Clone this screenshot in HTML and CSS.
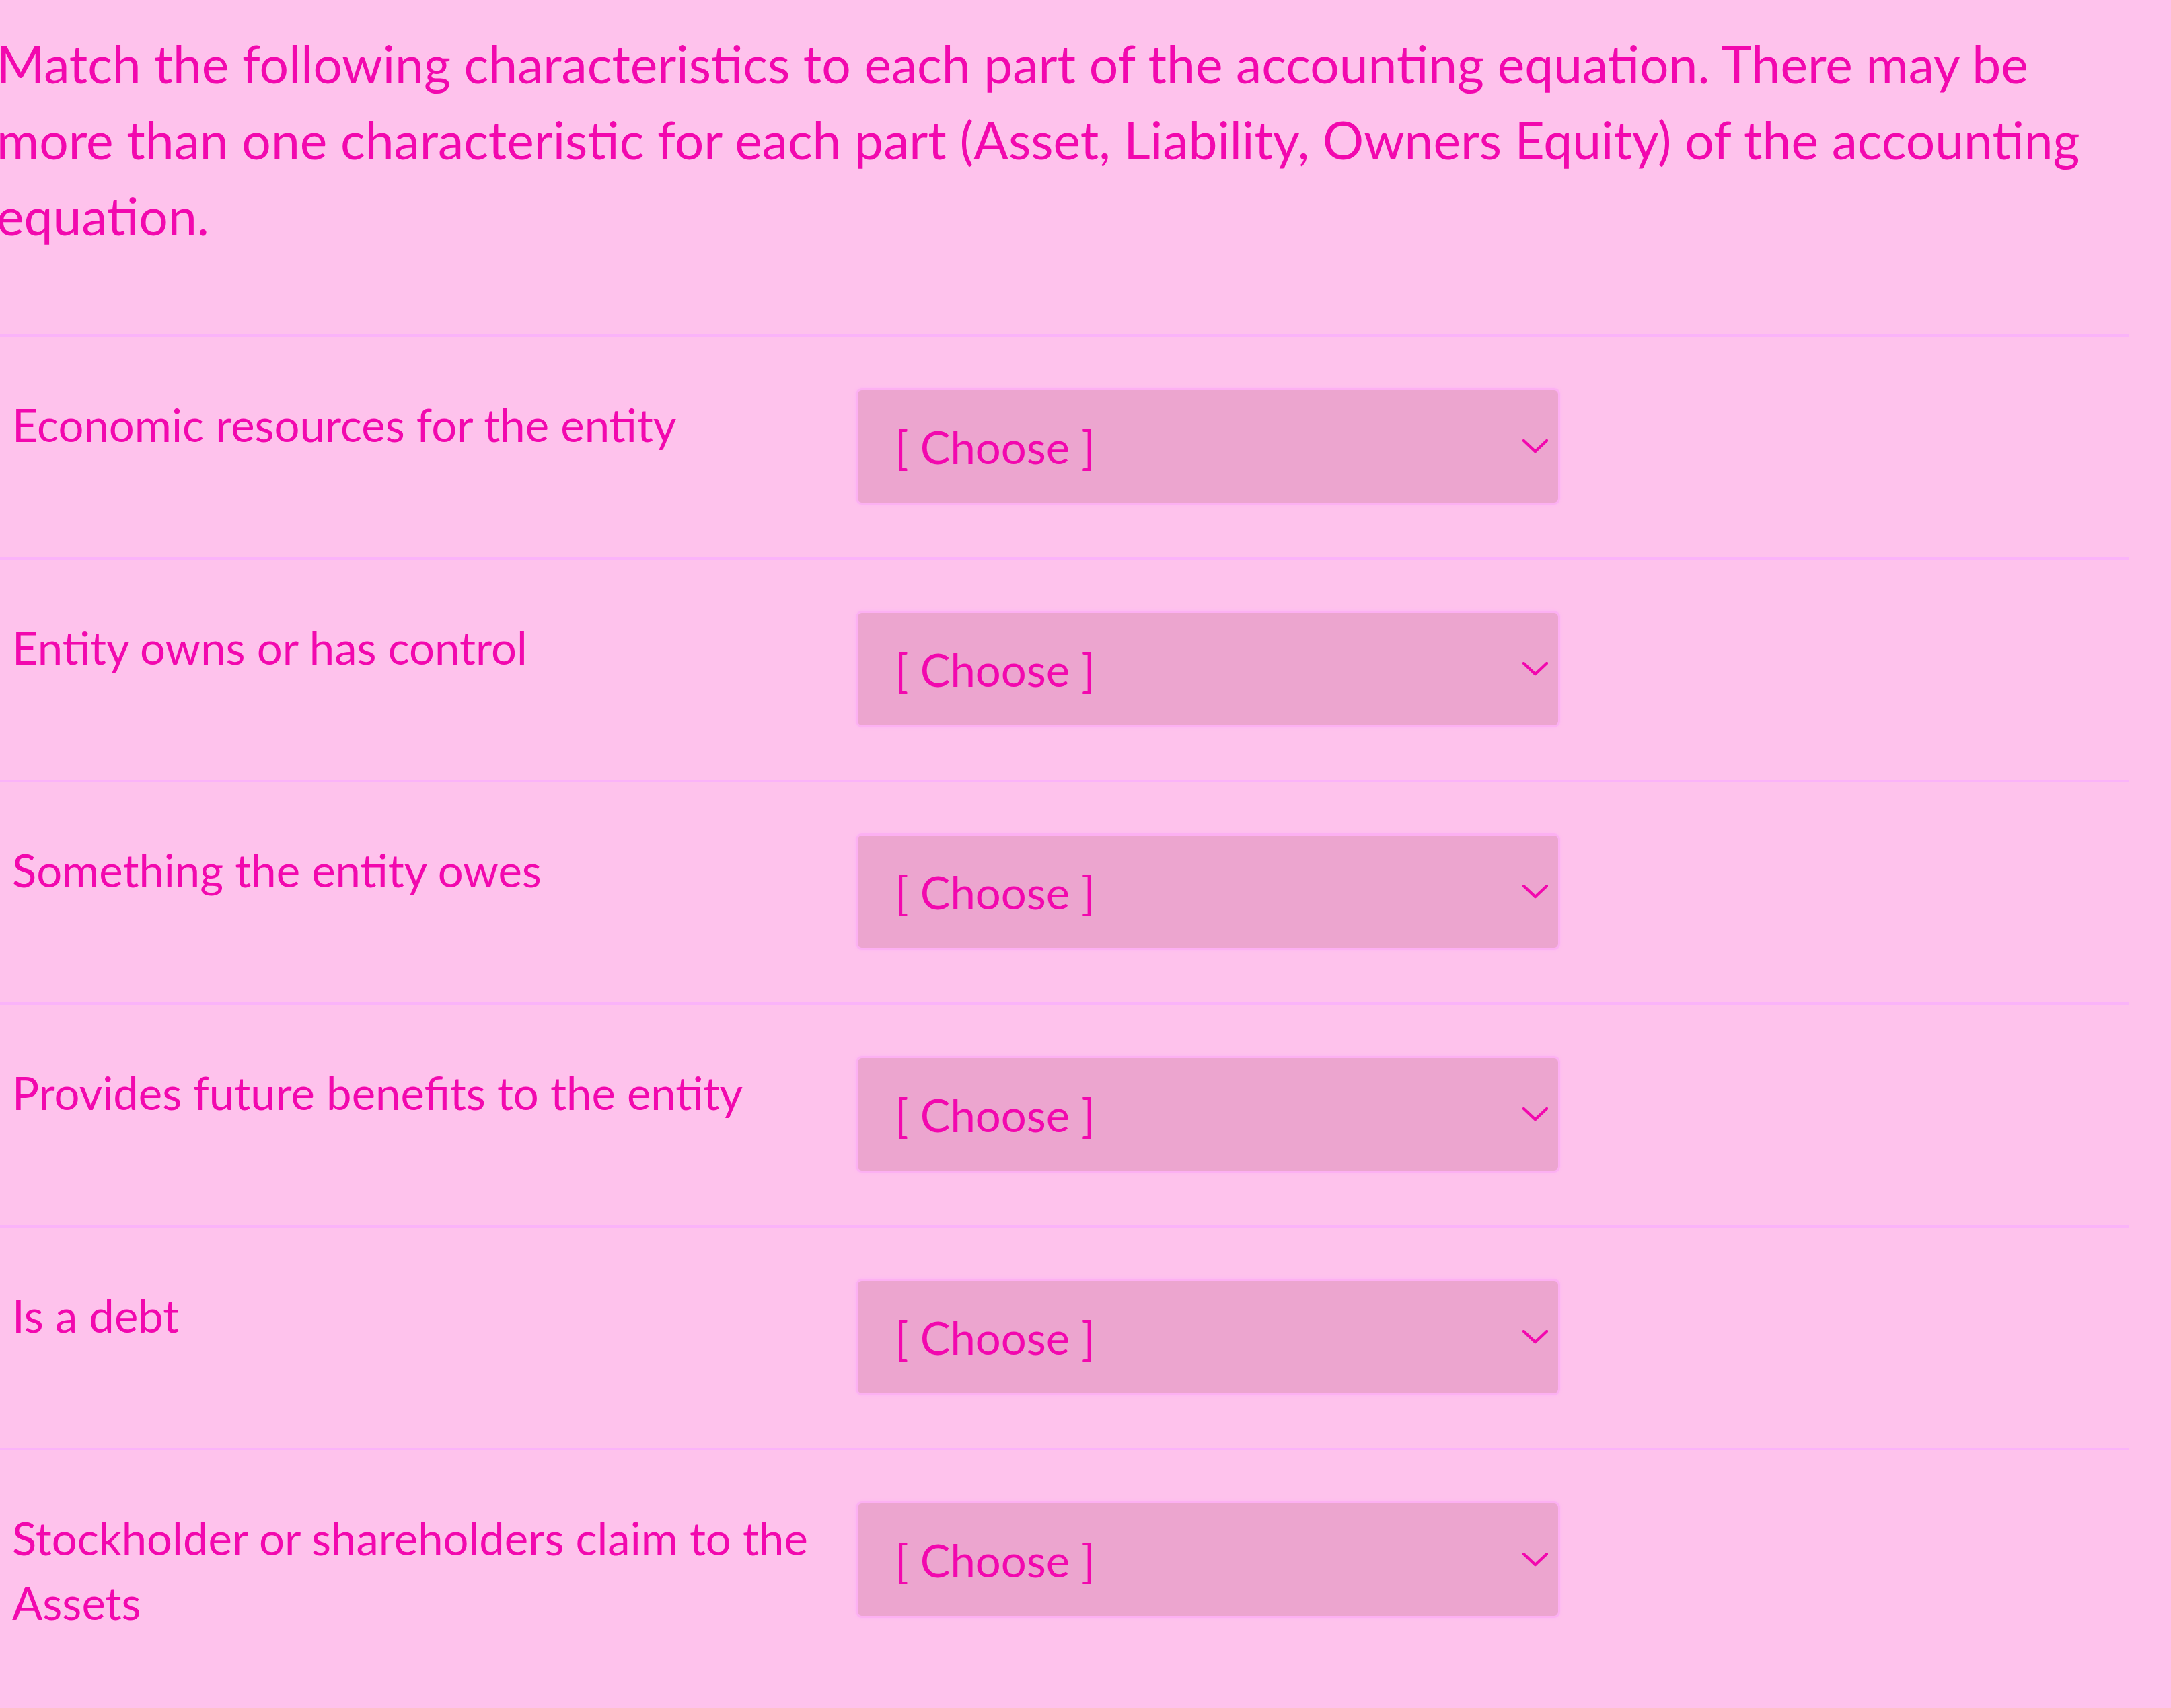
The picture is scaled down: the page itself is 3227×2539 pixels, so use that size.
FILE: index.html
```html
<!DOCTYPE html>
<html lang="en">
<head>
    <meta charset="UTF-8">
    <meta name="viewport" content="width=device-width, initial-scale=1.0">
    <title>Matching Question</title>
    <link rel="stylesheet" href="styles.css">
</head>
<body>
<div class="question">
    <p class="question-text">Match the following characteristics to each part of the accounting equation. There may be more than one characteristic for each part (Asset, Liability, Owners Equity) of the accounting equation.</p>

    <div class="answers">
        <div class="answer-row">
            <div class="answer-label">Economic resources for the entity</div>
            <div class="select-wrap">
                <select class="answer-select">
                    <option>[ Choose ]</option>
                    <option>Asset</option>
                    <option>Liability</option>
                    <option>Owners Equity</option>
                </select>
                <svg class="chevron" viewBox="0 0 40 22"><path d="M2 2 L20 19 L38 2"/></svg>
            </div>
        </div>
        <div class="answer-row">
            <div class="answer-label">Entity owns or has control</div>
            <div class="select-wrap">
                <select class="answer-select">
                    <option>[ Choose ]</option>
                    <option>Asset</option>
                    <option>Liability</option>
                    <option>Owners Equity</option>
                </select>
                <svg class="chevron" viewBox="0 0 40 22"><path d="M2 2 L20 19 L38 2"/></svg>
            </div>
        </div>
        <div class="answer-row">
            <div class="answer-label">Something the entity owes</div>
            <div class="select-wrap">
                <select class="answer-select">
                    <option>[ Choose ]</option>
                    <option>Asset</option>
                    <option>Liability</option>
                    <option>Owners Equity</option>
                </select>
                <svg class="chevron" viewBox="0 0 40 22"><path d="M2 2 L20 19 L38 2"/></svg>
            </div>
        </div>
        <div class="answer-row">
            <div class="answer-label">Provides future benefits to the entity</div>
            <div class="select-wrap">
                <select class="answer-select">
                    <option>[ Choose ]</option>
                    <option>Asset</option>
                    <option>Liability</option>
                    <option>Owners Equity</option>
                </select>
                <svg class="chevron" viewBox="0 0 40 22"><path d="M2 2 L20 19 L38 2"/></svg>
            </div>
        </div>
        <div class="answer-row">
            <div class="answer-label">Is a debt</div>
            <div class="select-wrap">
                <select class="answer-select">
                    <option>[ Choose ]</option>
                    <option>Asset</option>
                    <option>Liability</option>
                    <option>Owners Equity</option>
                </select>
                <svg class="chevron" viewBox="0 0 40 22"><path d="M2 2 L20 19 L38 2"/></svg>
            </div>
        </div>
        <div class="answer-row">
            <div class="answer-label">Stockholder or shareholders claim to the Assets</div>
            <div class="select-wrap">
                <select class="answer-select">
                    <option>[ Choose ]</option>
                    <option>Asset</option>
                    <option>Liability</option>
                    <option>Owners Equity</option>
                </select>
                <svg class="chevron" viewBox="0 0 40 22"><path d="M2 2 L20 19 L38 2"/></svg>
            </div>
        </div>
    </div>
</div>
</body>
</html>
```

FILE: styles.css
```css
body {
    font-family: Lato, "Open Sans", sans-serif;
    background-color: #fec2ec;
    color: #f208ae;
    margin: 0;
    padding: 0;
}

.question {
    width: 3165px;
}

/* Question text */
.question-text {
    font-size: 76.8px;
    line-height: 113px;
    margin: 38px 0 0 -5px;
    padding-bottom: 120px;
}

/* Answer rows */
.answer-row {
    display: flex;
    align-items: flex-start;
    border-top: 4px solid #fab3f9;
    padding: 76px 0 78px;
}

.answer-label {
    flex: 0 0 1272px;
    box-sizing: border-box;
    padding: 6px 30px 0 18px;
    font-size: 67px;
    line-height: 96px;
}

.select-wrap {
    position: relative;
    width: 1047px;
    height: 173px;
}

.answer-select {
    -webkit-appearance: none;
    appearance: none;
    width: 100%;
    height: 100%;
    box-sizing: border-box;
    background: #eca5cf;
    border: 3px solid #fcb0f2;
    border-radius: 9px;
    box-shadow: 0 0 4px #fcb6f4;
    color: #f208ae;
    font-family: Lato, "Open Sans", sans-serif;
    font-size: 67px;
    padding: 0 0 0 55px;
    margin: 0;
    outline: none;
}

.chevron {
    position: absolute;
    right: 18px;
    top: 76px;
    width: 38px;
    height: 21px;
    pointer-events: none;
}

.chevron path {
    fill: none;
    stroke: #f208ae;
    stroke-width: 4.5;
    stroke-linecap: round;
    stroke-linejoin: round;
}
```
